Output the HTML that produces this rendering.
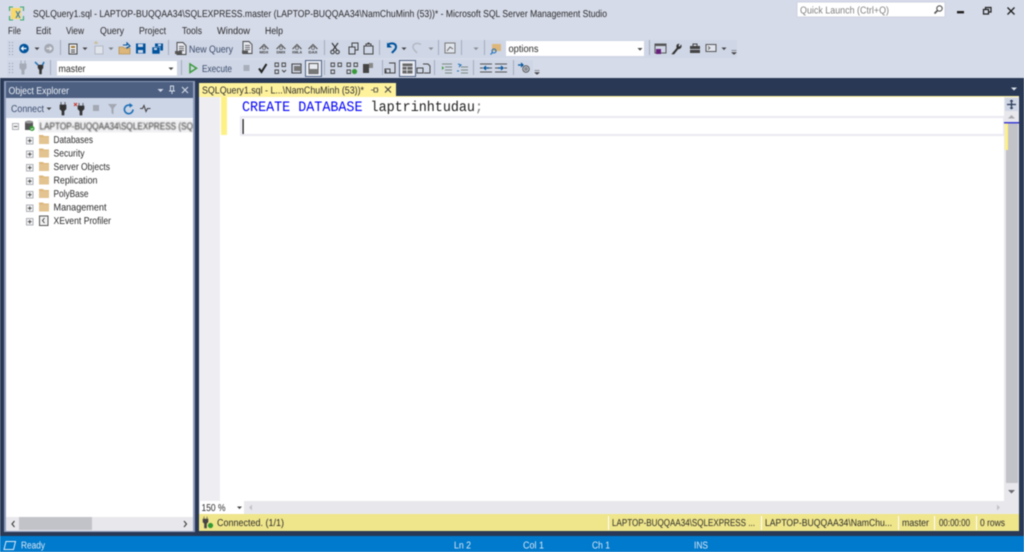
<!DOCTYPE html>
<html><head><meta charset="utf-8"><title>SSMS</title>
<style>
html,body{margin:0;padding:0;width:1024px;height:552px;overflow:hidden;background:#d6dbe9}
svg{display:block;filter:blur(.4px)}
text{font-family:"Liberation Sans",sans-serif;font-size:10px;fill:#2a2a2a}
.m{font-family:"Liberation Mono",monospace;font-size:14.4px}
.t{fill:#3a4a6b}
.w{fill:#dfe9f5}
.d{font-size:3.6px;font-weight:bold;fill:#333}
</style></head><body>
<svg width="1024" height="552" viewBox="0 0 1024 552" xmlns="http://www.w3.org/2000/svg" text-rendering="geometricPrecision">
<defs>
<pattern id="grip" width="3" height="3" patternUnits="userSpaceOnUse"><rect width="1" height="1" fill="#8f98ad"/></pattern>
<g id="dd"><path d="M-2.500-1h5L0 1.600z" fill="#444"/></g>
<g id="plus"><rect x="-3" y="-3" width="6.500" height="6.500" fill="#f6f6f6" stroke="#a5a9b0" stroke-width=".9"/><path d="M-1.700 .2h3.900M.25-1.700v3.900" stroke="#333" stroke-width=".8"/></g>
<g id="folder"><path d="M0 1h4l1 1h5v8H0z" fill="#dcb67a"/><path d="M0 3h10v7H0z" fill="#e3c38f"/></g>
<g id="sep"><rect x="0" y="-8" width="1" height="15" fill="#a3acbf"/></g>
<g id="file"><path d="M-4-6h6l3 3v9h-9z" fill="#e6e9f0" stroke="#424242" stroke-width=".9"/><path d="M-2-2h5M-2 0h5M-2 2h5" stroke="#424242" stroke-width=".7"/></g>
<g id="db"><path d="M-4.500 0L0-4.500 4.500 0" fill="none" stroke="#555" stroke-width="1"/><path d="M-3.500 0v-1M3.500 0v-1" stroke="#555" stroke-width=".8"/><circle cx="0" cy="-1" r="1.500" fill="none" stroke="#666" stroke-width=".8"/></g>
</defs>

<rect width="1024" height="552" fill="#d6dbe9"/>

<!-- logo -->
<path d="M11 8h10v11H11z" fill="#f7d86a"/>
<path d="M13 7H9.500v4M20 7h3.500v4" fill="none" stroke="#3aa76d" stroke-width="1.100"/>
<path d="M9.500 16v4H13M23.500 16v4H20" fill="none" stroke="#3aa76d" stroke-width="1.100"/>
<path d="M16 11l4 7M20 11l-4 7" stroke="#2e78b8" stroke-width="1.100"/>

<text x="33" y="17" textLength="574" lengthAdjust="spacingAndGlyphs">SQLQuery1.sql - LAPTOP-BUQQAA34\SQLEXPRESS.master (LAPTOP-BUQQAA34\NamChuMinh (53))* - Microsoft SQL Server Management Studio</text>

<!-- quick launch -->
<rect x="797" y="2" width="148" height="15" fill="#fff" stroke="#ccd2df"/>
<text x="800" y="13.500" textLength="89" lengthAdjust="spacingAndGlyphs" style="fill:#7f7f7f">Quick Launch (Ctrl+Q)</text>
<circle cx="939.500" cy="8.500" r="2.700" fill="none" stroke="#555" stroke-width="1.100"/><path d="M937.500 10.500l-3 3" stroke="#555" stroke-width="1.600"/>

<!-- window controls -->
<rect x="957" y="11" width="7" height="2.400" fill="#1e1e1e"/>
<path d="M983.500 9.500h5v4.500h-5zM985.500 9.500V7.500h5.500v4.500h-2" fill="none" stroke="#1e1e1e" stroke-width="1.200"/>
<path d="M1007.500 7.500l7 7M1014.500 7.500l-7 7" stroke="#1e1e1e" stroke-width="1.300"/>

<!-- menu -->
<text x="8" y="34" textLength="13" lengthAdjust="spacingAndGlyphs">File</text>
<text x="36" y="34" textLength="15" lengthAdjust="spacingAndGlyphs">Edit</text>
<text x="66" y="34" textLength="18" lengthAdjust="spacingAndGlyphs">View</text>
<text x="100" y="34" textLength="24" lengthAdjust="spacingAndGlyphs">Query</text>
<text x="139" y="34" textLength="27" lengthAdjust="spacingAndGlyphs">Project</text>
<text x="182" y="34" textLength="20" lengthAdjust="spacingAndGlyphs">Tools</text>
<text x="217" y="34" textLength="33" lengthAdjust="spacingAndGlyphs">Window</text>
<text x="265" y="34" textLength="18" lengthAdjust="spacingAndGlyphs">Help</text>

<!-- toolbars -->
<rect x="7" y="40" width="730" height="18" fill="#cfd6e5"/>
<rect x="7" y="60" width="526" height="17" fill="#cfd6e5"/>
<rect x="9" y="41" width="5" height="15" fill="url(#grip)"/>
<rect x="9" y="61" width="5" height="14" fill="url(#grip)"/>

<!-- row 1 -->
<circle cx="24" cy="48.500" r="4.800" fill="#00539c"/><path d="M21.500 48.500h5M23.500 46.500l-2 2 2 2" fill="none" stroke="#fff" stroke-width="1.200"/>
<use href="#dd" x="37" y="48.500"/>
<circle cx="49" cy="48.500" r="4.800" fill="#a3a8b2"/><path d="M46.500 48.500h5M49.500 46.500l2 2-2 2" fill="none" stroke="#e3e6ec" stroke-width="1.200"/>
<use href="#sep" x="60" y="48"/>
<path d="M69 44h8v10h-8z" fill="#eceef3" stroke="#424242"/><rect x="71" y="46" width="4" height="2" fill="#a87f3a"/><path d="M71 50h4M71 52h4" stroke="#424242"/>
<use href="#dd" x="85" y="48.500"/>
<path d="M95 46h8v8h-8z" fill="#dfe3ea" stroke="#b3b9c5"/><path d="M96 44v-3M94 43h4" stroke="#c9b98a"/>
<use href="#dd" x="111" y="48.500" opacity=".6"/>
<path d="M119 47h4l1 1h6v6h-11z" fill="#dcb67a" stroke="#a87f3a" stroke-width=".6"/><path d="M123 45h4v-2l3 3-3 2v-1" fill="none" stroke="#00539c" stroke-width="1.100"/>
<path d="M136 43.500h9.500v10H136z" fill="#00539c"/><rect x="138" y="44" width="5" height="3" fill="#cfd6e5"/><rect x="138" y="50" width="5" height="3" fill="#cfd6e5"/>
<path d="M155 43.500h8v7h-8z" fill="#00539c"/><path d="M152 47h8v7h-8z" fill="#00539c" stroke="#cfd6e5" stroke-width=".6"/><rect x="154" y="48" width="3" height="2" fill="#cfd6e5"/><rect x="158" y="44" width="3" height="2" fill="#cfd6e5"/>
<use href="#sep" x="168" y="48"/>
<use href="#file" x="181" y="48.500"/><rect x="175" y="51" width="7" height="3" fill="#555"/>
<text x="189" y="52.500" textLength="44" lengthAdjust="spacingAndGlyphs" class="t">New Query</text>
<use href="#file" x="247" y="47.500"/><rect x="242" y="50.500" width="6" height="3" fill="#555"/>
<use href="#db" x="264" y="49"/><text class="d" x="259.500" y="53.500" textLength="9" lengthAdjust="spacingAndGlyphs">MDX</text>
<use href="#db" x="281" y="49"/><text class="d" x="276.500" y="53.500" textLength="9" lengthAdjust="spacingAndGlyphs">DMX</text>
<use href="#db" x="297" y="49"/><text class="d" x="292" y="53.500" textLength="10" lengthAdjust="spacingAndGlyphs">XMLA</text>
<use href="#db" x="313" y="49"/><text class="d" x="308.500" y="53.500" textLength="9" lengthAdjust="spacingAndGlyphs">DAX</text>
<use href="#sep" x="324" y="48"/>
<path d="M332 43l5 7M338 43l-5 7" stroke="#333" stroke-width="1.100"/><circle cx="332.500" cy="52" r="1.800" fill="none" stroke="#333"/><circle cx="337.500" cy="52" r="1.800" fill="none" stroke="#333"/>
<path d="M349 47h6v7h-6zM352 47v-4h6v7h-3" fill="none" stroke="#424242"/>
<path d="M364 46h9v8h-9z" fill="none" stroke="#424242"/><path d="M366 46v-2h2v-1h1v1h2v2" fill="none" stroke="#424242"/>
<use href="#sep" x="379" y="48"/>
<path d="M388 44.500c3-2 8-1.500 8 2.500 0 3-3 4-4 6" fill="none" stroke="#00539c" stroke-width="2"/><path d="M387 42.500v5h5z" fill="#00539c"/>
<use href="#dd" x="404" y="48.500"/>
<path d="M421 44.500c-3-2-8-1.500-8 2.500 0 3 3 4 4 6" fill="none" stroke="#b2b8c4" stroke-width="1.500"/>
<use href="#dd" x="431" y="48.500" opacity=".5"/>
<use href="#sep" x="438" y="48"/>
<rect x="445" y="43" width="10" height="10" fill="#e0e4ec" stroke="#777"/><path d="M447 51l3-4 3 2" fill="none" stroke="#666"/>
<use href="#sep" x="461" y="48"/>
<use href="#dd" x="476" y="48.500" opacity=".5"/>
<use href="#sep" x="484" y="48"/>
<rect x="492" y="44" width="9" height="7" fill="#dcb67a"/><circle cx="494" cy="51" r="2" fill="none" stroke="#1e6fb5" stroke-width="1.100"/><path d="M492.500 52.500l-2 2" stroke="#1e6fb5" stroke-width="1.200"/>
<rect x="506" y="41" width="138" height="15" fill="#fff"/>
<text x="508.500" y="52" textLength="30" lengthAdjust="spacingAndGlyphs">options</text>
<use href="#dd" x="640" y="49"/>
<use href="#sep" x="649" y="48"/>
<path d="M655 44h11v9h-11z" fill="none" stroke="#555"/><rect x="655" y="44" width="11" height="2" fill="#555"/><rect x="656" y="49" width="5" height="5" fill="#68217a"/>
<path d="M672 54l5-6c-1-2 0-4 2-4l-1 2 2 1 1-2c1 2-1 4-3 4l-4 5z" fill="#333" stroke="#333" stroke-width=".6"/>
<rect x="690" y="46" width="10" height="7" fill="#444"/><path d="M693 46v-2h4v2" fill="none" stroke="#444"/><rect x="690" y="49" width="10" height=".8" fill="#cfd6e5"/>
<rect x="706" y="44.500" width="10" height="7" fill="#e0e4ec" stroke="#555"/><path d="M708 46.500l2 1.500-2 1.500" fill="none" stroke="#555" stroke-width=".8"/>
<use href="#dd" x="724" y="48.500"/>
<path d="M731.500 50.500h5M731.500 52.500h5l-2.500 2z" fill="#444" stroke="#444" stroke-width=".5"/>

<!-- row 2 -->
<path d="M20 64h6v4l-2 2v4h-2v-4l-2-2zM21 60.500v3M25 60.500v3" fill="#a5abb7" stroke="#a5abb7"/>
<path d="M38 65h5v3l-1.500 2v4h-2v-4L38 68z" fill="#333" stroke="#333" stroke-width=".5"/><path d="M35 62l3 3M44 62l-1.500 3" stroke="#1e6fb5" stroke-width="1.500"/>
<use href="#sep" x="50" y="68"/>
<rect x="57" y="61" width="120" height="14.500" fill="#fff"/>
<text x="58.500" y="72" textLength="27" lengthAdjust="spacingAndGlyphs">master</text>
<use href="#dd" x="171" y="68.500"/>
<use href="#sep" x="181" y="68"/>
<path d="M190 64v8.500l6.500-4.300z" fill="none" stroke="#3a9a3a" stroke-width="1.500"/>
<text x="202" y="72" textLength="30" lengthAdjust="spacingAndGlyphs" class="t">Execute</text>
<rect x="243.500" y="65" width="6" height="6" fill="#a8aebb"/>
<path d="M259 68.500l2.500 3.500 5-8" fill="none" stroke="#222" stroke-width="2"/>
<path d="M275 63h3.500v3.500H275zM282 63h3.500v3.500H282zM275 70h3.500v3.500H275z" fill="none" stroke="#444" stroke-width=".9"/><path d="M282 70l2 2 2-2" fill="none" stroke="#444"/>
<path d="M292 64h9v9h-9z" fill="none" stroke="#444" stroke-width="1.100"/><rect x="294" y="66" width="7" height="5" fill="#777"/>
<rect x="305.500" y="60.500" width="16" height="16" fill="#e8ebf2" stroke="#4d6082"/>
<rect x="309" y="63.500" width="9" height="10" fill="none" stroke="#555"/><rect x="309" y="69" width="9" height="4.500" fill="#777"/>
<use href="#sep" x="324" y="68"/>
<path d="M331 63h3.500v3.500H331zM338 63h3.500v3.500H338zM331 70h3.500v3.500H331z" fill="none" stroke="#444" stroke-width=".9"/>
<path d="M347 63h3.500v3.500H347zM354 63h3.500v3.500H354zM347 70h3.500v3.500H347z" fill="none" stroke="#444" stroke-width=".9"/><circle cx="354.500" cy="71.500" r="2.600" fill="#3a9a3a"/>
<rect x="363" y="64" width="6" height="9" fill="#444"/><rect x="369" y="63" width="4" height="5" fill="#888"/>
<use href="#sep" x="382" y="68"/>
<path d="M389 63h6v10h-9v-3" fill="none" stroke="#444"/><rect x="385" y="69" width="5" height="4" fill="none" stroke="#444"/>
<rect x="399.500" y="60.500" width="16" height="16" fill="#e8ebf2" stroke="#4d6082"/>
<rect x="402.500" y="63.500" width="10" height="10" fill="#666"/><path d="M402.500 66.500h10M402.500 70h10M407 67v6" stroke="#e8ebf2" stroke-width=".8"/>
<path d="M423 64h5l2 2v7h-6M417 68h6v5h-6z" fill="none" stroke="#444"/>
<use href="#sep" x="434" y="68"/>
<path d="M442 64h10M445 67h7M445 70h7M445 73h7" stroke="#7c8a83"/><path d="M442 66l2 2-2 2" fill="#3a9a3a"/>
<path d="M458 64l3 1-2 2M457 71h2" stroke="#1e6fb5" fill="none"/><path d="M461 67h7M461 70h7M461 73h7" stroke="#7c8a83"/>
<use href="#sep" x="473" y="68"/>
<path d="M480 64h12M480 72h12M480 68h3M489 68h3" stroke="#555"/><path d="M489 68h-5m2-2l-2 2 2 2" fill="none" stroke="#00539c" stroke-width="1.200"/>
<path d="M495 64h12M495 72h12M495 68h3M504 68h3" stroke="#555"/><path d="M498 68h5m-2-2l2 2-2 2" fill="none" stroke="#00539c" stroke-width="1.200"/>
<use href="#sep" x="513" y="68"/>
<path d="M518 65h5m-2-2l2 2-2 2" fill="none" stroke="#00539c" stroke-width="1.200"/><circle cx="526" cy="69" r="3.200" fill="none" stroke="#555"/><circle cx="526" cy="69" r="1.200" fill="none" stroke="#555" stroke-width=".8"/>
<path d="M534.500 70.500h5M534.500 72.500h5l-2.500 2z" fill="#444" stroke="#444" stroke-width=".5"/>

<!-- navy workspace -->
<rect x="0" y="78" width="1024" height="458" fill="#293955"/>
<path d="M1011 87.500h6l-3 3z" fill="#dfe4ee"/>

<!-- Object Explorer -->
<rect x="4" y="81" width="191" height="451" fill="#8e9bbc"/>
<rect x="6" y="82" width="187" height="16" fill="#4d6082"/>
<text x="8.500" y="94" textLength="60.500" lengthAdjust="spacingAndGlyphs" style="fill:#eef1f6">Object Explorer</text>
<path d="M157.500 89h6l-3 3z" fill="#d5dbe8"/>
<path d="M170 86h4M170.500 86v5h3v-5M169 91h6M172 91v3" fill="none" stroke="#d5dbe8"/>
<path d="M182 87l6 6M188 87l-6 6" stroke="#d5dbe8" stroke-width="1.100"/>
<rect x="6" y="98" width="187" height="20" fill="#ccd5e6"/>
<text x="11" y="112" textLength="33" lengthAdjust="spacingAndGlyphs" class="t">Connect</text>
<use href="#dd" x="49" y="108.500"/>
<path d="M60 105h6v4l-2 2v4h-2v-4l-2-2zM61 102v3M65 102v3" fill="#333" stroke="#333" stroke-width=".7"/>
<path d="M78 106h6v3l-2 2v4h-2v-4l-2-2zM79 103v3M83 103v3" fill="#333" stroke="#333" stroke-width=".7"/>
<path d="M74 103l3 3M77 103l-3 3" stroke="#c8342a"/>
<rect x="93" y="105" width="6" height="6" fill="#a3a8b2"/>
<path d="M108 104h9l-3.500 4.500v6l-2-1.500v-4.500z" fill="#a3a8b2"/>
<path d="M133 109.500a4.300 4.300 0 1 1-1.800-3.600" fill="none" stroke="#1e6fb5" stroke-width="1.600"/><path d="M129.500 103l3.500 2.500-3.500 2.200z" fill="#1e6fb5"/>
<path d="M140 108.500h2.500l1.500-3 2 6 1.500-3h3" fill="none" stroke="#444" stroke-width="1.100"/>

<rect x="6" y="118" width="187" height="399" fill="#fff"/>
<rect x="38" y="119.500" width="155" height="13" fill="#f1f1f3"/>
<rect x="12.500" y="123.500" width="6" height="6" fill="#f6f6f6" stroke="#a5a9b0" stroke-width=".9"/><path d="M13.800 126.500h3.500" stroke="#333" stroke-width=".8"/>
<path d="M25 122c0-1.500 8-1.500 8 0v8h-8z" fill="#555"/><ellipse cx="29" cy="122" rx="4" ry="1.500" fill="#999"/><circle cx="32" cy="128.500" r="2.500" fill="#339933"/><path d="M30.800 128.500l1 1 1.500-1.500" stroke="#fff" stroke-width=".7" fill="none"/>
<svg x="38" y="118" width="155" height="16"><text x="1.500" y="11.500" textLength="153.500" lengthAdjust="spacingAndGlyphs">LAPTOP-BUQQAA34\SQLEXPRESS (SQ</text></svg>

<use href="#plus" x="29.500" y="140.500"/><use href="#folder" x="39" y="134"/>
<text x="53.500" y="143" textLength="39.500" lengthAdjust="spacingAndGlyphs">Databases</text>
<use href="#plus" x="29.500" y="154"/><use href="#folder" x="39" y="147.500"/>
<text x="53.500" y="156.500" textLength="31" lengthAdjust="spacingAndGlyphs">Security</text>
<use href="#plus" x="29.500" y="167.500"/><use href="#folder" x="39" y="161"/>
<text x="53.500" y="170" textLength="56.500" lengthAdjust="spacingAndGlyphs">Server Objects</text>
<use href="#plus" x="29.500" y="181"/><use href="#folder" x="39" y="174.500"/>
<text x="53.500" y="183.500" textLength="44" lengthAdjust="spacingAndGlyphs">Replication</text>
<use href="#plus" x="29.500" y="194.500"/><use href="#folder" x="39" y="188"/>
<text x="53.500" y="197" textLength="35" lengthAdjust="spacingAndGlyphs">PolyBase</text>
<use href="#plus" x="29.500" y="208"/><use href="#folder" x="39" y="201.500"/>
<text x="53.500" y="210.500" textLength="53" lengthAdjust="spacingAndGlyphs">Management</text>
<use href="#plus" x="29.500" y="221.500"/>
<rect x="39.500" y="216" width="8.500" height="9.500" fill="#f2f2f2" stroke="#555"/><path d="M44.500 218l-2 2.500 2 2.500" fill="none" stroke="#444"/>
<text x="53.500" y="224" textLength="57.500" lengthAdjust="spacingAndGlyphs">XEvent Profiler</text>

<rect x="6" y="517" width="187" height="14" fill="#e8e8ec"/>
<rect x="19" y="517" width="73" height="13" fill="#c2c3c9"/>
<path d="M14.500 521l-2.500 3 2.500 3" fill="none" stroke="#444" stroke-width="1.200"/>
<path d="M184 521l2.500 3-2.500 3" fill="none" stroke="#444" stroke-width="1.200"/>

<!-- Tab -->
<rect x="199" y="83" width="197" height="14" fill="#fff29d"/>
<text x="202" y="93.500" textLength="162" lengthAdjust="spacingAndGlyphs">SQLQuery1.sql - L...\NamChuMinh (53))*</text>
<path d="M371 90h3M374 88v4h3.500v-4zM377.500 90h1" fill="none" stroke="#444" stroke-width=".8"/>
<path d="M385 86.500l6 6M391 86.500l-6 6" stroke="#444" stroke-width="1.100"/>
<rect x="199" y="96" width="820" height="1.500" fill="#fff29d"/>

<!-- Editor -->
<rect x="199" y="97" width="820" height="404" fill="#fff"/>
<rect x="199" y="97" width="21" height="404" fill="#eeeef2"/>
<rect x="220" y="97" width="1" height="404" fill="#fff"/>
<rect x="221" y="97" width="6" height="38" fill="#fdf087"/>
<rect x="241" y="117" width="763" height="18" fill="#fff" stroke="#eaeaf2" stroke-width="2"/>
<text class="m" x="242" y="111" textLength="241" lengthAdjust="spacingAndGlyphs" style="fill:#1e1e1e" xml:space="preserve"><tspan style="fill:#0000ff">CREATE DATABASE</tspan> laptrinhtudau<tspan style="fill:#808080">;</tspan></text>
<rect x="242.500" y="119" width="1.200" height="15" fill="#111"/>

<!-- V scrollbar -->
<rect x="1004" y="97" width="15" height="404" fill="#e8e8ec"/>
<rect x="1005" y="98" width="13" height="13" fill="#cfd6e5"/>
<path d="M1007 104.500h9M1011.500 100v9" stroke="#293955" stroke-width="1.300"/><path d="M1009.500 101.500l2-2 2 2M1009.500 107.500l2 2 2-2" fill="#293955"/>
<path d="M1008 118.500l3.500-3.500 3.500 3.500z" fill="#a8a8b0"/>
<rect x="1006" y="123" width="12" height="360" fill="#c2c3c9"/>
<rect x="1005" y="123" width="3" height="27" fill="#fdf087"/>
<rect x="1004" y="122" width="15" height="1.500" fill="#3b3bd6"/>
<path d="M1008 490l3.500 3.500 3.500-3.500z" fill="#6a6a72"/>

<!-- H scroll / zoom -->
<rect x="199" y="501" width="820" height="13" fill="#e8e8ec"/>
<rect x="200" y="501" width="44" height="13" fill="#fff"/>
<text x="201.500" y="511" textLength="24" lengthAdjust="spacingAndGlyphs">150 %</text>
<use href="#dd" x="239.500" y="507.500"/>
<path d="M252 504.500l-3 3 3 3z" fill="#c2c3c9"/>
<path d="M997 504.500l3 3-3 3z" fill="#c2c3c9"/>

<!-- Query status -->
<rect x="199" y="514" width="820" height="17" fill="#efe58b"/>
<path d="M203 519h5v3l-1.500 1.500V528h-2v-4.500L203 522zM204 516.500v2.500M207 516.500v2.500" fill="#444" stroke="#444" stroke-width=".6"/>
<circle cx="210.500" cy="525.500" r="2.600" fill="#339933"/>
<text x="217" y="526" textLength="67" lengthAdjust="spacingAndGlyphs">Connected. (1/1)</text>
<rect x="608" y="516" width="1" height="14" fill="#fff"/>
<text x="612" y="526" textLength="143" lengthAdjust="spacingAndGlyphs">LAPTOP-BUQQAA34\SQLEXPRESS ...</text>
<rect x="761" y="516" width="1" height="14" fill="#fff"/>
<text x="765" y="526" textLength="127" lengthAdjust="spacingAndGlyphs">LAPTOP-BUQQAA34\NamChu...</text>
<rect x="898" y="516" width="1" height="14" fill="#fff"/>
<text x="902" y="526" textLength="27" lengthAdjust="spacingAndGlyphs">master</text>
<rect x="934" y="516" width="1" height="14" fill="#fff"/>
<text x="939" y="526" textLength="31" lengthAdjust="spacingAndGlyphs">00:00:00</text>
<rect x="976" y="516" width="1" height="14" fill="#fff"/>
<text x="980" y="526" textLength="25" lengthAdjust="spacingAndGlyphs">0 rows</text>

<!-- Bottom status -->
<rect x="0" y="536" width="1024" height="16" fill="#007acc"/>
<path d="M6 541.500h9.500L13.500 549.500H4z" fill="none" stroke="#dfe9f5" stroke-width="1"/>
<text class="w" x="21" y="548.500" textLength="24" lengthAdjust="spacingAndGlyphs">Ready</text>
<text class="w" x="454" y="548.500" textLength="17" lengthAdjust="spacingAndGlyphs">Ln 2</text>
<text class="w" x="523" y="548.500" textLength="21" lengthAdjust="spacingAndGlyphs">Col 1</text>
<text class="w" x="592" y="548.500" textLength="18" lengthAdjust="spacingAndGlyphs">Ch 1</text>
<text class="w" x="694" y="548.500" textLength="14" lengthAdjust="spacingAndGlyphs">INS</text>
</svg>
</body></html>
